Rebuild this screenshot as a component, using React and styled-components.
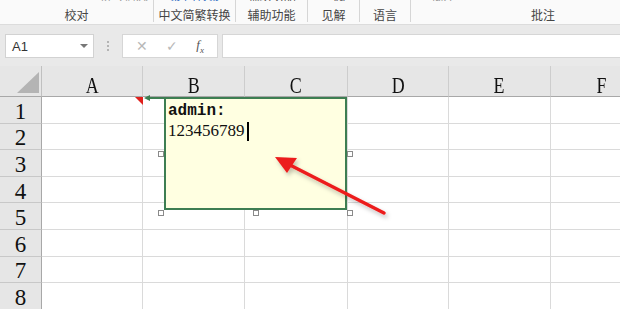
import React from "react";
import styled, { createGlobalStyle } from "styled-components";

const GlobalStyle = createGlobalStyle`
    html, body {
        margin: 0;
        padding: 0;
        background: #ffffff;
        overflow: hidden;
    }
    body {
        font-family: "Noto Sans CJK SC", "Liberation Sans", sans-serif;
    }
`;

const Page = styled.div`
    width: 620px;
    height: 309px;
    position: relative;
    overflow: hidden;
    background: #ffffff;
`;

/* ---------- ribbon ---------- */

const Ribbon = styled.div`
    display: flex;
    height: 25px;
    background: #fafafa;
    border-bottom: 1px solid #dcdcdc;
    box-sizing: border-box;
    overflow: hidden;
`;

const Group = styled.div`
    flex: 0 0 ${(p) => p.$w}px;
    display: flex;
    flex-direction: column;
    align-items: center;
    border-right: ${(p) => (p.$last ? "none" : "1px solid #d6d6d6")};
    box-sizing: border-box;
    height: 22px;
`;

const TopStrip = styled.div`
    height: 4px;
    overflow: hidden;
    width: 100%;
    display: flex;
    justify-content: ${(p) => p.$align || "center"};
    padding-left: ${(p) => p.$pad || 0}px;
    box-sizing: border-box;
    & span {
        display: block;
        margin-top: -11px;
        font-size: 12px;
        line-height: 14px;
        color: ${(p) => p.$color || "#9a9a9a"};
        white-space: nowrap;
    }
`;

const GroupLabel = styled.span`
    font-size: 12px;
    line-height: 14px;
    margin-top: 7px;
    color: #454545;
    white-space: nowrap;
`;

/* ---------- formula bar ---------- */

const FormulaArea = styled.div`
    height: 41px;
    background: #e9e9e9;
    display: flex;
    align-items: flex-start;
    padding: 9px 0 0 5px;
    box-sizing: border-box;
`;

const NameBox = styled.div`
    width: 89px;
    height: 24px;
    background: #fff;
    border: 1px solid #d2d2d2;
    box-sizing: border-box;
    display: flex;
    align-items: center;
    justify-content: space-between;
    padding: 0 5px 0 6px;
    font-family: "Liberation Sans", sans-serif;
    font-size: 13px;
    color: #333;
`;

const Caret = styled.span`
    width: 0;
    height: 0;
    border-left: 4px solid transparent;
    border-right: 4px solid transparent;
    border-top: 4px solid #777;
`;

const Dots = styled.div`
    width: 28px;
    height: 24px;
    display: flex;
    flex-direction: column;
    align-items: center;
    justify-content: center;
    gap: 2px;
    & i {
        width: 2px;
        height: 2px;
        background: #b4b4b4;
        display: block;
    }
`;

const FxBox = styled.div`
    width: 96px;
    height: 24px;
    background: #fff;
    border: 1px solid #d6d6d6;
    box-sizing: border-box;
    display: flex;
    align-items: center;
    justify-content: space-around;
    padding: 0 4px;
    color: #b8b8b8;
    font-family: "Liberation Sans", sans-serif;
    font-size: 14px;
`;

const FxIcon = styled.span`
    font-family: "Liberation Serif", serif;
    font-style: italic;
    font-size: 13px;
    color: #555;
    & sub {
        font-size: 9px;
    }
`;

const Input = styled.div`
    flex: 1;
    margin-left: 4px;
    height: 24px;
    background: #fff;
    border: 1px solid #d6d6d6;
    border-right: none;
    box-sizing: border-box;
`;

/* ---------- sheet ---------- */

const Sheet = styled.div`
    position: relative;
`;

const Grid = styled.div`
    display: grid;
    grid-template-columns: 42px 101px 102px 103px 101px 102px 102px;
    grid-template-rows: 31px repeat(8, 26.6px);
`;

const Corner = styled.div`
    background: #e6e6e6;
    border-right: 1px solid #c0c0c0;
    border-bottom: 1px solid #a8a8a8;
    box-sizing: border-box;
    display: flex;
    align-items: flex-end;
    justify-content: flex-end;
    padding: 0 2px 3px 0;
    & span {
        width: 0;
        height: 0;
        border-left: 22px solid transparent;
        border-bottom: 21px solid #b4b4b4;
    }
`;

const ColHead = styled.div`
    background: #e6e6e6;
    border-right: 1px solid #cdcdcd;
    border-bottom: 1px solid #a8a8a8;
    box-sizing: border-box;
    display: flex;
    align-items: flex-end;
    justify-content: center;
    font-family: "Liberation Serif", serif;
    font-size: 23px;
    line-height: 21px;
    color: #111;
    & span {
        display: inline-block;
        transform: scaleX(0.78);
    }
`;

const RowHead = styled.div`
    background: #e6e6e6;
    border-right: 1px solid #a8a8a8;
    border-bottom: 1px solid #c8c8c8;
    box-sizing: border-box;
    display: flex;
    align-items: center;
    justify-content: center;
    font-family: "Liberation Serif", serif;
    font-size: 23px;
    line-height: 23px;
    color: #111;
    padding-top: 3px;
`;

const Cell = styled.div`
    background: #fff;
    border-right: 1px solid #dadada;
    border-bottom: 1px solid #dadada;
    box-sizing: border-box;
`;

/* ---------- comment overlay ---------- */

const RedMark = styled.div`
    position: absolute;
    left: 135px;
    top: 31px;
    width: 0;
    height: 0;
    border-left: 8px solid transparent;
    border-top: 8px solid #e0201c;
`;

const Connector = styled.svg`
    position: absolute;
    left: 144px;
    top: 28px;
`;

const Comment = styled.div`
    position: absolute;
    left: 164px;
    top: 31px;
    width: 183px;
    height: 113px;
    background: #ffffe1;
    border: 2px solid #3d7e52;
    box-sizing: border-box;
    padding: 3px 0 0 2px;
    color: #111;
`;

const Author = styled.div`
    font-family: "Liberation Mono", monospace;
    font-weight: bold;
    font-size: 16px;
    line-height: 18px;
`;

const Body = styled.div`
    font-family: "Liberation Serif", serif;
    font-size: 17px;
    line-height: 20px;
    margin-top: 1px;
    display: flex;
    align-items: center;
    & b {
        display: inline-block;
        width: 2px;
        height: 19px;
        background: #000;
        margin-left: 2px;
    }
`;

const Handle = styled.div`
    position: absolute;
    left: ${(p) => p.$x - 3}px;
    top: ${(p) => p.$y - 3}px;
    width: 6px;
    height: 6px;
    border: 1px solid #8a8a8a;
    background: #fff;
    box-sizing: border-box;
`;

const Arrow = styled.svg`
    position: absolute;
    left: 0;
    top: 0;
    pointer-events: none;
`;

const groups = [
    { w: 154, label: "校对", top: "拼写信息", pad: 100, align: "flex-start" },
    { w: 82, label: "中文简繁转换", top: "繁 简转繁", color: "#2a6bc2" },
    { w: 72, label: "辅助功能", top: "辅助功能", color: "#555" },
    { w: 52, label: "见解", top: "查阅", color: "#555" },
    { w: 51, label: "语言", top: "" },
    { w: 264, label: "批注", top: "批注", pad: 20, align: "flex-start", last: true },
];

const cols = ["A", "B", "C", "D", "E", "F"];
const rows = [1, 2, 3, 4, 5, 6, 7, 8];

function App() {
    return (
        <Page>
            <GlobalStyle />
            <Ribbon>
                {groups.map((g) => (
                    <Group key={g.label} $w={g.w} $last={g.last}>
                        <TopStrip $align={g.align} $pad={g.pad} $color={g.color}>
                            <span>{g.top}</span>
                        </TopStrip>
                        <GroupLabel>{g.label}</GroupLabel>
                    </Group>
                ))}
            </Ribbon>

            <FormulaArea>
                <NameBox>
                    A1
                    <Caret />
                </NameBox>
                <Dots>
                    <i />
                    <i />
                    <i />
                </Dots>
                <FxBox>
                    <span>✕</span>
                    <span>✓</span>
                    <FxIcon>
                        f<sub>x</sub>
                    </FxIcon>
                </FxBox>
                <Input />
            </FormulaArea>

            <Sheet>
                <Grid>
                    <Corner>
                        <span />
                    </Corner>
                    {cols.map((c) => (
                        <ColHead key={c}>
                            <span>{c}</span>
                        </ColHead>
                    ))}
                    {rows.map((r) => (
                        <React.Fragment key={r}>
                            <RowHead>{r}</RowHead>
                            {cols.map((c) => (
                                <Cell key={c} />
                            ))}
                        </React.Fragment>
                    ))}
                </Grid>

                <RedMark />
                <Connector width="22" height="8" viewBox="0 0 22 8">
                    <line x1="3" y1="4" x2="21" y2="4" stroke="#3d7e52" strokeWidth="2" />
                    <polygon points="0,4 6,1 6,7" fill="#3d7e52" />
                </Connector>

                <Comment>
                    <Author>admin:</Author>
                    <Body>
                        123456789
                        <b />
                    </Body>
                </Comment>

                <Handle $x={161} $y={88} />
                <Handle $x={350} $y={88} />
                <Handle $x={161} $y={147} />
                <Handle $x={256} $y={147} />
                <Handle $x={350} $y={147} />
            </Sheet>

            <Arrow width="620" height="309" viewBox="0 0 620 309">
                <defs>
                    <filter id="sh" x="-20%" y="-20%" width="140%" height="140%">
                        <feDropShadow dx="2" dy="3" stdDeviation="2" floodColor="#000" floodOpacity="0.25" />
                    </filter>
                </defs>
                <g filter="url(#sh)">
                    <line x1="384" y1="213" x2="288" y2="164" stroke="#ec1c1c" strokeWidth="3.5" strokeLinecap="round" />
                    <polygon points="275,157 297,158 287,173" fill="#ec1c1c" />
                </g>
            </Arrow>
        </Page>
    );
}

export default App;
